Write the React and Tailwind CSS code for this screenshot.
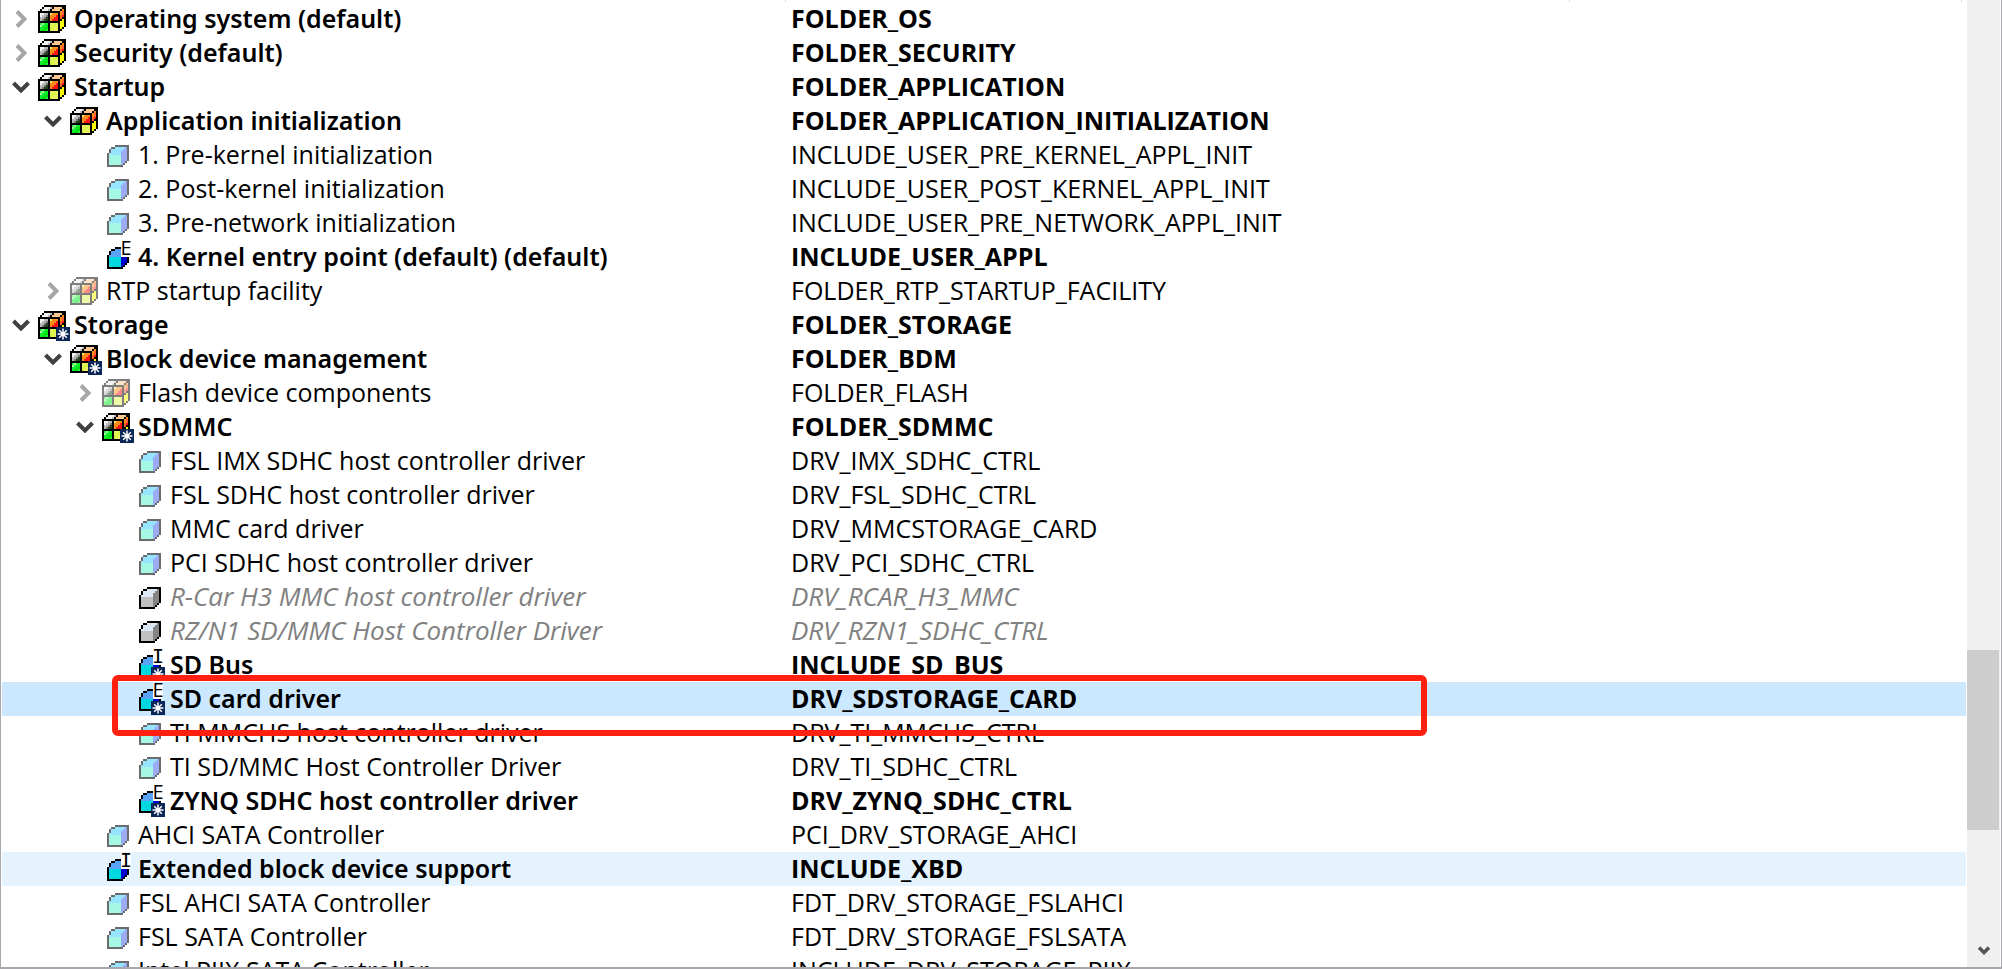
const CUBE = [
  "...KKKKKKKKKKK",
  "..KwwwgKppppKK",
  ".KwwwgKppppKoK",
  "KKKKKKKKKKKorK",
  "KwwggKyoooKorK",
  "KwggdKoooRKrRK",
  "KggdkKooRRKrKK",
  "KgdkkKoRRRKKYK",
  "KKKKKKKKKKKYYK",
  "KLWGGKyyEEKYYK",
  "KWGGeKyEEyKYYK",
  "KGGeeKEEyyKYK.",
  "KGeeLKEyyyKK..",
  "KKKKKKKKKKK...",
];

const LEAF = [
  "....KKKKKKK",
  "..KKtttttsK",
  ".KttttttssK",
  ".KtttttsssK",
  "KttttttsssK",
  "KffffffsssK",
  "KffffffsssK",
  "KffffffsssK",
  "KffffffssK.",
  "KffffffsK..",
  "KKKKKKKK...",
];

const CUBE_COLORS = {
  K: "#000000", w: "#f4f4f4", g: "#b8b8b8", d: "#787878", k: "#204020",
  p: "#ffc890", o: "#ff8c1a", r: "#ff6030", R: "#ff1414", y: "#e8f060",
  Y: "#ffff00", E: "#d8f848", L: "#30e850", W: "#a8ffa0", G: "#10f030", e: "#00e010",
};

const LEAF_COLORS = {
  off: { K: "#6b6b6b", t: "#96e4ff", f: "#a4f8e4", s: "#9cacf4" },
  on: { K: "#000000", t: "#5aa4f8", f: "#00d8e0", s: "#0000d0" },
  missing: { K: "#000000", t: "#dce8f4", f: "#c0c0c0", s: "#848484" },
};

function Pixels({ rows, colors, className }) {
  const cells = [];
  rows.forEach((row, y) => {
    for (let x = 0; x < row.length; x++) {
      if (row[x] !== ".") {
        cells.push(<rect key={`${x}-${y}`} x={x} y={y} width="1" height="1" fill={colors[row[x]]} />);
      }
    }
  });
  return (
    <svg viewBox={`0 0 ${rows[0].length} ${rows.length}`} shapeRendering="crispEdges" className={className} aria-hidden="true">
      {cells}
    </svg>
  );
}

function Badge({ className }) {
  return (
    <svg viewBox="0 0 14 14" className={`absolute size-[14px] ${className}`} aria-hidden="true">
      <rect width="14" height="14" fill="#0c2658" />
      <path d="M7 1.5v11M1.5 7h11M3.2 3.2l7.6 7.6M10.8 3.2l-7.6 7.6" stroke="#fff" strokeWidth="1.5" />
    </svg>
  );
}

function FolderIcon({ dim, badge }) {
  return (
    <span className="relative mr-2 block size-7 shrink-0">
      <Pixels rows={CUBE} colors={CUBE_COLORS} className={dim ? "size-7 opacity-50" : "size-7"} />
      {badge && <Badge className="left-[18px] top-4" />}
    </span>
  );
}

function LeafIcon({ kind, mark, badge }) {
  return (
    <span className="relative mr-[9px] mt-0.5 block size-[22px] shrink-0">
      <Pixels rows={LEAF} colors={LEAF_COLORS[kind]} className="size-[22px]" />
      {mark === "E" && (
        <span className="absolute -top-1.5 left-3.5 flex h-4 w-2.5 justify-center bg-white font-['Open_Sans',sans-serif] text-[20px] leading-[13px]">E</span>
      )}
      {mark === "I" && (
        <span className="absolute -top-1.5 left-3.5 flex h-4 w-2.5 justify-center bg-white font-['DejaVu_Sans_Mono',monospace] text-[20px] leading-[14px]">I</span>
      )}
      {badge && <Badge className="left-3 top-3" />}
    </span>
  );
}

function Toggle({ open, label }) {
  return (
    <button type="button" aria-label={`${open ? "Collapse" : "Expand"} ${label}`} className="mr-[7px] flex h-7 w-5 shrink-0 items-center justify-center">
      {open ? (
        <svg viewBox="0 0 18 12" className="h-3 w-[18px]" aria-hidden="true">
          <path d="M1.5 2l7.5 7.5L16.500 2" fill="none" stroke="#404040" strokeWidth="4" />
        </svg>
      ) : (
        <svg viewBox="0 0 12 18" className="h-[18px] w-3" aria-hidden="true">
          <path d="M2 1.500l7.500 7.500L2 16.500" fill="none" stroke="#a6a6a6" strokeWidth="4" />
        </svg>
      )}
    </button>
  );
}

const ROWS = [
  { level: 0, type: "folder", name: "Operating system (default)", id: "FOLDER_OS", bold: true },
  { level: 0, type: "folder", name: "Security (default)", id: "FOLDER_SECURITY", bold: true },
  { level: 0, type: "folder", open: true, name: "Startup", id: "FOLDER_APPLICATION", bold: true },
  { level: 1, type: "folder", open: true, name: "Application initialization", id: "FOLDER_APPLICATION_INITIALIZATION", bold: true },
  { level: 2, kind: "off", name: "1. Pre-kernel initialization", id: "INCLUDE_USER_PRE_KERNEL_APPL_INIT" },
  { level: 2, kind: "off", name: "2. Post-kernel initialization", id: "INCLUDE_USER_POST_KERNEL_APPL_INIT" },
  { level: 2, kind: "off", name: "3. Pre-network initialization", id: "INCLUDE_USER_PRE_NETWORK_APPL_INIT" },
  { level: 2, kind: "on", mark: "E", name: "4. Kernel entry point (default) (default)", id: "INCLUDE_USER_APPL", bold: true },
  { level: 1, type: "folder", dim: true, name: "RTP startup facility", id: "FOLDER_RTP_STARTUP_FACILITY" },
  { level: 0, type: "folder", open: true, badge: true, name: "Storage", id: "FOLDER_STORAGE", bold: true },
  { level: 1, type: "folder", open: true, badge: true, name: "Block device management", id: "FOLDER_BDM", bold: true },
  { level: 2, type: "folder", dim: true, name: "Flash device components", id: "FOLDER_FLASH" },
  { level: 2, type: "folder", open: true, badge: true, name: "SDMMC", id: "FOLDER_SDMMC", bold: true },
  { level: 3, kind: "off", name: "FSL IMX SDHC host controller driver", id: "DRV_IMX_SDHC_CTRL" },
  { level: 3, kind: "off", name: "FSL SDHC host controller driver", id: "DRV_FSL_SDHC_CTRL" },
  { level: 3, kind: "off", name: "MMC card driver", id: "DRV_MMCSTORAGE_CARD" },
  { level: 3, kind: "off", name: "PCI SDHC host controller driver", id: "DRV_PCI_SDHC_CTRL" },
  { level: 3, kind: "missing", name: "R-Car H3 MMC host controller driver", id: "DRV_RCAR_H3_MMC" },
  { level: 3, kind: "missing", name: "RZ/N1 SD/MMC Host Controller Driver", id: "DRV_RZN1_SDHC_CTRL" },
  { level: 3, kind: "on", mark: "I", badge: true, name: "SD Bus", id: "INCLUDE_SD_BUS", bold: true },
  { level: 3, kind: "on", mark: "E", badge: true, name: "SD card driver", id: "DRV_SDSTORAGE_CARD", bold: true, state: "selected" },
  { level: 3, kind: "off", name: "TI MMCHS host controller driver", id: "DRV_TI_MMCHS_CTRL" },
  { level: 3, kind: "off", name: "TI SD/MMC Host Controller Driver", id: "DRV_TI_SDHC_CTRL" },
  { level: 3, kind: "on", mark: "E", badge: true, name: "ZYNQ SDHC host controller driver", id: "DRV_ZYNQ_SDHC_CTRL", bold: true },
  { level: 2, kind: "off", name: "AHCI SATA Controller", id: "PCI_DRV_STORAGE_AHCI" },
  { level: 2, kind: "on", mark: "I", name: "Extended block device support", id: "INCLUDE_XBD", bold: true, state: "hover" },
  { level: 2, kind: "off", name: "FSL AHCI SATA Controller", id: "FDT_DRV_STORAGE_FSLAHCI" },
  { level: 2, kind: "off", name: "FSL SATA Controller", id: "FDT_DRV_STORAGE_FSLSATA" },
  { level: 2, kind: "off", name: "Intel PIIX SATA Controller", id: "INCLUDE_DRV_STORAGE_PIIX" },
];

const INDENT = { 0: "pl-[9px]", 1: "pl-[41px]", 2: "pl-[73px]", 3: "pl-[105px]" };
const LEAF_INDENT = { 2: "pl-[105px]", 3: "pl-[137px]" };
const STATE = { selected: "bg-[#cce8ff]", hover: "bg-[#e5f3ff]" };

function Row({ row }) {
  const folder = row.type === "folder";
  const text = row.kind === "missing" ? "italic text-[26px] text-[#808080]" : "";
  return (
    <tr className={`h-[34px] ${STATE[row.state] || ""}`} aria-level={row.level + 1} aria-selected={row.state === "selected"}>
      <td className="p-0">
        <div className={`flex h-[34px] items-center ${folder ? INDENT[row.level] : LEAF_INDENT[row.level]}`}>
          {folder ? (
            <>
              <Toggle open={row.open} label={row.name} />
              <FolderIcon dim={row.dim} badge={row.badge} />
            </>
          ) : (
            <LeafIcon kind={row.kind} mark={row.mark} badge={row.badge} />
          )}
          <span className={`pb-0.5 ${text} ${row.bold ? "font-['Noto_Sans',sans-serif] font-semibold" : ""}`}>{row.name}</span>
        </div>
      </td>
      <td className={`p-0 pb-0.5 pl-px ${text} ${row.bold ? "font-bold" : ""}`}>{row.id}</td>
    </tr>
  );
}

export default function App() {
  return (
    <div className="relative flex h-screen overflow-hidden border-b-2 border-l border-r border-[#a8a8ac] bg-white font-['Open_Sans','Noto_Sans',sans-serif] text-[25px] leading-8 text-black">
      <main className="min-w-0 flex-1 overflow-hidden pl-px">
        <div className="flex h-0.5">
          <div className="w-[784px] shrink-0 border-r border-[#dcdcdc]" />
          <div className="flex-[2] border-r border-[#dcdcdc]" />
          <div className="flex-1 border-r border-[#dcdcdc]" />
          <div className="w-1" />
        </div>
        <table role="treegrid" aria-label="Components" className="w-full table-fixed border-collapse whitespace-nowrap">
          <colgroup>
            <col className="w-[788px]" />
            <col />
          </colgroup>
          <tbody>
            {ROWS.map((row) => (
              <Row key={row.id} row={row} />
            ))}
          </tbody>
        </table>
      </main>
      <div className="ml-px mr-px flex w-[33px] shrink-0 flex-col bg-[#f0f0f0]">
        <div className="grow-[650]" />
        <div className="mr-px grow-[180] bg-[#cdcdcd]" />
        <div className="grow-[104]" />
        <button type="button" aria-label="Scroll down" className="flex h-[33px] items-center justify-center">
          <svg viewBox="0 0 12 10" className="h-2.5 w-3" aria-hidden="true">
            <path d="M1 1.5l5 5 5-5" fill="none" stroke="#555" strokeWidth="3.5" />
          </svg>
        </button>
      </div>
      <div className="pointer-events-none absolute left-[111px] top-[675px] h-[61px] w-[1315px] rounded-md border-[6px] border-[#ff2010]" />
    </div>
  );
}
